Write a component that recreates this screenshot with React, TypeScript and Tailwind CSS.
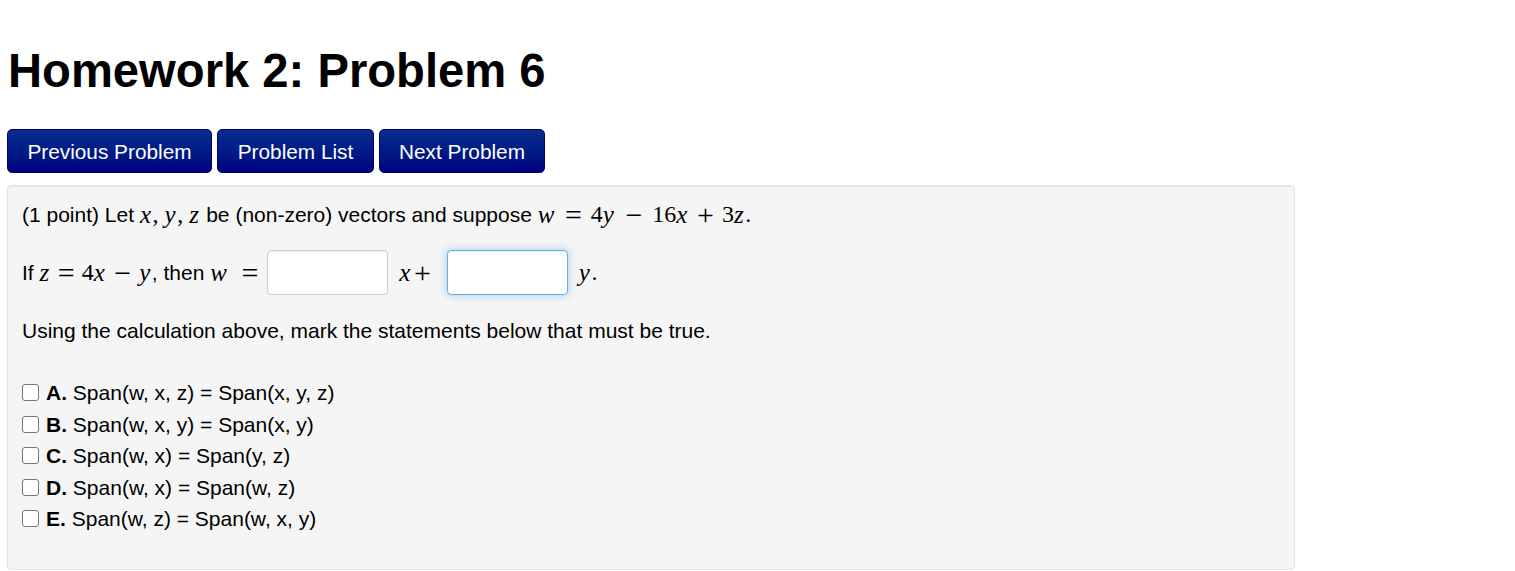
import React from 'react';

const sans = { fontFamily: '"Liberation Sans", Arial, sans-serif' };

// italic variable, the way MathJax sets x, y, z, w
function V({ c }: { c: string }) {
  return <i className="font-['Liberation_Serif',serif] text-[25px] italic mr-[1.5px]">{c}</i>;
}

function N({ c }: { c: string }) {
  return <span className="font-['Liberation_Serif',serif] text-[24px]">{c}</span>;
}

// relation / binary operator, drawn larger to get the Computer Modern width
function Op({ c, cls = 'mx-[6px]' }: { c: string; cls?: string }) {
  return (
    <span className={`font-['Liberation_Serif',serif] text-[30px] leading-none ${cls}`}>{c}</span>
  );
}

const navButtons = [
  { label: 'Previous Problem', w: 'w-[205px]' },
  { label: 'Problem List', w: 'w-[157px]' },
  { label: 'Next Problem', w: 'w-[166px]' },
];

const options = [
  { key: 'A', text: 'Span(w, x, z) = Span(x, y, z)' },
  { key: 'B', text: 'Span(w, x, y) = Span(x, y)' },
  { key: 'C', text: 'Span(w, x) = Span(y, z)' },
  { key: 'D', text: 'Span(w, x) = Span(w, z)' },
  { key: 'E', text: 'Span(w, z) = Span(w, x, y)' },
];

export default function App() {
  return (
    <div className="min-h-screen bg-white text-black pl-[7px]" style={sans}>
      <h1 className="pt-[45px] pl-[1px] text-[47.2px] leading-[52px] font-bold">
        Homework 2: Problem 6
      </h1>

      <div className="flex gap-[5px] mt-[32px]">
        {navButtons.map((b) => (
          <button
            key={b.label}
            className={`${b.w} h-[44px] pt-[2px] rounded-[5px] border border-[#000066] bg-linear-to-b from-[#0b2c8c] to-[#00007f] text-white text-[20.8px] leading-none`}
          >
            {b.label}
          </button>
        ))}
      </div>

      <div className="mt-[12px] w-[1288px] rounded-[4px] border border-[#e3e3e3] bg-[#f5f5f5] shadow-[inset_0_1px_1px_rgba(0,0,0,0.05)] pl-[14px] pt-[13px] pb-[34px] text-[21px] leading-[31px]">
        <p className="h-[31px] flex items-center whitespace-pre">
          {'(1 point) Let '}
          <V c="x" />
          <N c=", " />
          <V c="y" />
          <N c=", " />
          <V c="z" />
          {' be (non-zero) vectors and suppose '}
          <V c="w" />
          <Op c="=" cls="mx-[9px]" />
          <N c="4" />
          <V c="y" />
          <Op c="−" cls="mx-[10px]" />
          <N c="16" />
          <V c="x" />
          <Op c="+" cls="mx-[8px]" />
          <N c="3" />
          <V c="z" />
          <N c="." />
        </p>

        <div className="mt-[20px] h-[45px] flex items-center whitespace-pre">
          {'If '}
          <V c="z" />
          <Op c="=" cls="mx-[7px]" />
          <N c="4" />
          <V c="x" />
          <Op c="−" cls="mx-[8px]" />
          <V c="y" />
          {', then '}
          <V c="w" />
          <Op c="=" cls="ml-[13px] mr-[9px]" />
          <input
            type="text"
            className="w-[121px] h-[45px] rounded-[4px] border border-[#cccccc] bg-white shadow-[inset_0_1px_1px_rgba(0,0,0,0.075)] outline-none"
          />
          <span className="ml-[11px]" />
          <V c="x" />
          <Op c="+" cls="ml-[2px]" />
          <input
            type="text"
            className="ml-[16px] w-[121px] h-[45px] rounded-[4px] border border-[#66afe9] bg-white shadow-[inset_0_1px_1px_rgba(0,0,0,0.075),0_0_8px_rgba(102,175,233,0.6)] outline-none"
          />
          <span className="ml-[11px]" />
          <V c="y" />
          <N c="." />
        </div>

        <p className="mt-[20px] h-[31px] flex items-center">
          Using the calculation above, mark the statements below that must be true.
        </p>

        <div className="mt-[31px] flex flex-col">
          {options.map((o) => (
            <label key={o.key} className="h-[31.5px] flex items-center">
              <span className="w-[17px] h-[17px] rounded-[3px] border border-[#767676] bg-white" />
              <span className="ml-[7px] font-bold">{o.key}.</span>
              <span className="whitespace-pre">{' ' + o.text}</span>
            </label>
          ))}
        </div>
      </div>
    </div>
  );
}
